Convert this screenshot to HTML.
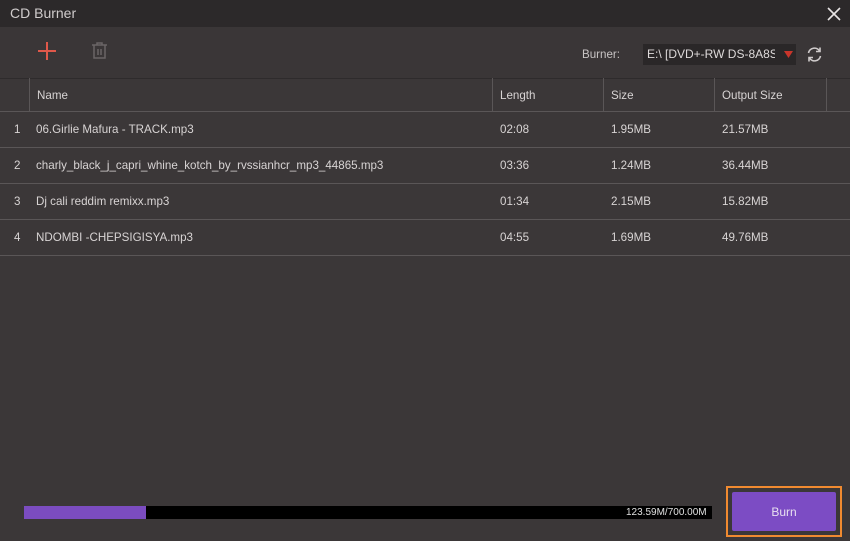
<!DOCTYPE html>
<html><head><style>
*{margin:0;padding:0;box-sizing:border-box}
body{width:850px;height:541px;background:#3b3738;font-family:"Liberation Sans",sans-serif;color:#d8d4d4;position:relative;overflow:hidden;font-size:11.6px}
.title{position:absolute;left:0;top:0;width:850px;height:27px;background:#2c292a;}
.title span{position:absolute;left:10px;top:5px;font-size:14px;color:#d0cccc}
.tool{position:absolute;left:0;top:27px;width:850px;height:51px;background:#3a3637;}
.hdr{position:absolute;left:0;top:78px;width:850px;height:34px;border-top:1px solid #2e2b2c;border-bottom:1px solid #5a5657;}
.row{position:absolute;left:0;width:850px;height:36px;border-bottom:1px solid #5a5657;}
.c{position:absolute;top:0;height:100%;display:flex;align-items:center;padding-left:8px}
.vl{position:absolute;top:78px;height:34px;width:1px;background:#5a5657}
</style></head><body>
<div class="title"><span>CD Burner</span>
<svg style="position:absolute;left:827px;top:7px" width="14" height="14"><path d="M1 1L13 13M13 1L1 13" stroke="#e8e4e4" stroke-width="1.6"/></svg></div>
<div class="tool">
<svg style="position:absolute;left:37px;top:14px" width="20" height="20"><path d="M10 1V19M1 10H19" stroke="#e0584a" stroke-width="2"/></svg>
<svg style="position:absolute;left:91px;top:15px" width="17" height="17" fill="none" stroke="#6a6566" stroke-width="1.5"><path d="M1 3H16M6 3V1H11V3M3 3V16H14V3M7 7V13M10 7V13"/></svg>
<span style="position:absolute;left:582px;top:21px;color:#c8c4c4">Burner:</span>
<div style="position:absolute;left:643px;top:17px;width:153px;height:21px;background:#2a2728;"></div>
<div style="position:absolute;left:647px;top:20px;width:128px;height:16px;overflow:hidden;white-space:nowrap;color:#dedada;font-size:12px">E:\ [DVD+-RW DS-8A8SI</div>
<svg style="position:absolute;left:784px;top:24px" width="9" height="7"><path d="M0 0H9L4.5 7Z" fill="#c9352b"/></svg>
<svg style="position:absolute;left:806px;top:19px" width="17" height="17" fill="none" stroke="#d0cccc" stroke-width="1.6"><path d="M2.5 7A6 6 0 0 1 13.5 5M14.5 10A6 6 0 0 1 3.5 12"/><path d="M14 1.5V5.5H10M3 15.5V11.5H7"/></svg>
</div>
<div class="hdr">
<div class="c" style="left:29px">Name</div><div class="c" style="left:492px">Length</div><div class="c" style="left:603px">Size</div><div class="c" style="left:714px">Output Size</div></div>
<div class="vl" style="left:29px"></div><div class="vl" style="left:492px"></div><div class="vl" style="left:603px"></div><div class="vl" style="left:714px"></div><div class="vl" style="left:826px"></div>
<div class="row" style="top:112px"><div class="c" style="left:6px">1</div><div class="c" style="left:28px">06.Girlie Mafura - TRACK.mp3</div><div class="c" style="left:492px">02:08</div><div class="c" style="left:603px">1.95MB</div><div class="c" style="left:714px">21.57MB</div></div>
<div class="row" style="top:148px"><div class="c" style="left:6px">2</div><div class="c" style="left:28px">charly_black_j_capri_whine_kotch_by_rvssianhcr_mp3_44865.mp3</div><div class="c" style="left:492px">03:36</div><div class="c" style="left:603px">1.24MB</div><div class="c" style="left:714px">36.44MB</div></div>
<div class="row" style="top:184px"><div class="c" style="left:6px">3</div><div class="c" style="left:28px">Dj cali reddim remixx.mp3</div><div class="c" style="left:492px">01:34</div><div class="c" style="left:603px">2.15MB</div><div class="c" style="left:714px">15.82MB</div></div>
<div class="row" style="top:220px"><div class="c" style="left:6px">4</div><div class="c" style="left:28px">NDOMBI -CHEPSIGISYA.mp3</div><div class="c" style="left:492px">04:55</div><div class="c" style="left:603px">1.69MB</div><div class="c" style="left:714px">49.76MB</div></div>
<div style="position:absolute;left:24px;top:506px;width:688px;height:13px;background:#000"></div>
<div style="position:absolute;left:24px;top:506px;width:122px;height:13px;background:#7b4cc0"></div>
<span style="position:absolute;left:626px;top:507px;font-size:10px;color:#e0e0e0">123.59M/700.00M</span>
<div style="position:absolute;left:726px;top:486px;width:116px;height:51px;border:2px solid #f08a30"></div>
<div style="position:absolute;left:732px;top:492px;width:104px;height:39px;background:#7c4cc4;border-radius:2px;color:#e8e0f0;display:flex;align-items:center;justify-content:center;font-size:12px">Burn</div>
</body></html>
